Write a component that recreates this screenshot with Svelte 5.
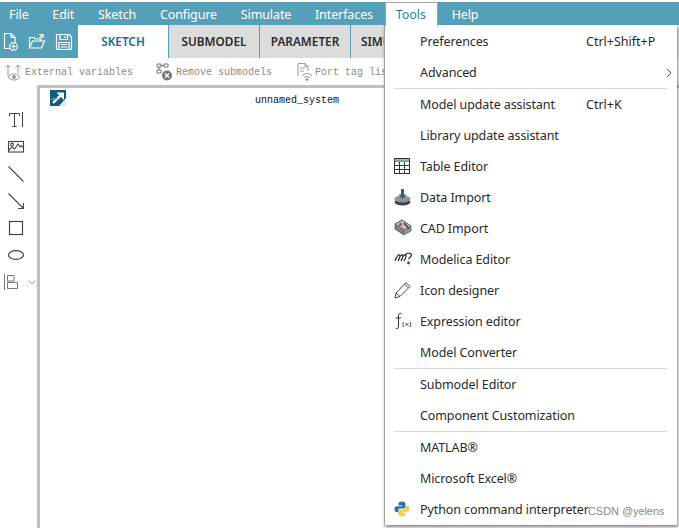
<script>
  const menus = [
    { label: 'File' }, { label: 'Edit' }, { label: 'Sketch' }, { label: 'Configure' },
    { label: 'Simulate' }, { label: 'Interfaces' }, { label: 'Tools', active: true }, { label: 'Help' }
  ];
  const groups = [
    [
      { label: 'Preferences', key: 'Ctrl+Shift+P' },
      { label: 'Advanced', arrow: true }
    ],
    [
      { label: 'Model update assistant', key: 'Ctrl+K' },
      { label: 'Library update assistant' },
      { label: 'Table Editor', icon: 'table' },
      { label: 'Data Import', icon: 'data' },
      { label: 'CAD Import', icon: 'cad' },
      { label: 'Modelica Editor', icon: 'modelica' },
      { label: 'Icon designer', icon: 'pencil' },
      { label: 'Expression editor', icon: 'fx' },
      { label: 'Model Converter' }
    ],
    [
      { label: 'Submodel Editor' },
      { label: 'Component Customization' }
    ],
    [
      { label: 'MATLAB®' },
      { label: 'Microsoft Excel®' },
      { label: 'Python command interpreter', icon: 'python' }
    ]
  ];
</script>

<div class="page">
  <nav class="menubar">
    {#each menus as m}
      <span class="menu-item" class:active={m.active}>{m.label}</span>
    {/each}
  </nav>

  <div class="tabrow">
    <div class="quick">
      <svg width="20" height="20" viewBox="0 0 20 20" fill="none" stroke="#fff" stroke-width="1.2">
        <path d="M10 16.5H4.5V1.5H11L15 5.5V10M11 1.5V5.5H15" />
        <circle cx="13.5" cy="14.5" r="3.8" />
        <path d="M13.5 12.3V16.7M11.3 14.5H15.7" />
      </svg>
      <svg class="q2" width="18" height="18" viewBox="0 0 18 18" fill="none" stroke="#fff" stroke-width="1.2">
        <path d="M1.5 15V4.5H6L7.5 6H13V8M1.5 15L4.5 8H16.5L13.5 15H1.5Z" />
        <path d="M11 1.5H15V5M15 1.5L11.5 5" />
      </svg>
      <svg class="q3" width="18" height="18" viewBox="0 0 18 18" fill="none" stroke="#fff" stroke-width="1.2">
        <path d="M1.5 1.5H14L16.5 4V16.5H1.5Z" />
        <path d="M5 1.5V6.5H12.5V1.5M10 3V5M4 16.5V9.5H14V16.5M6 11.5H12M6 14H12" />
      </svg>
    </div>
    <div class="tab current">SKETCH</div>
    <div class="tab">SUBMODEL</div>
    <div class="tab">PARAMETER</div>
    <div class="tab last">SIMULATION</div>
  </div>

  <div class="toolrow">
    <span class="tool first">
      <svg width="20" height="20" viewBox="0 0 20 20" fill="none" stroke="#9a9a9a" stroke-width="1">
        <path d="M4 14V3M1.5 5.5L4 3L6.5 5.5M14 11V3M11.5 5.5L14 3L16.5 5.5" />
        <ellipse cx="10" cy="15" rx="5.5" ry="3" />
        <circle cx="10" cy="15" r="1.5" fill="#9a9a9a" />
      </svg>
      External variables
    </span>
    <span class="tool second">
      <svg width="18" height="20" viewBox="0 0 18 20" fill="none" stroke="#777" stroke-width="1">
        <path d="M1 2H5V5H1ZM1 8H5V11H1ZM8 2H12V5H8ZM5 3.5H8M3 5V8" />
        <circle cx="11" cy="13.5" r="5" fill="#777" stroke="none" />
        <path d="M9 11.5L13 15.5M13 11.5L9 15.5" stroke="#fff" stroke-width="1.4" />
      </svg>
      Remove submodels
    </span>
    <span class="tool third">
      <svg width="18" height="20" viewBox="0 0 18 20" fill="none" stroke="#9a9a9a" stroke-width="1">
        <path d="M2 14V1.5H9L12 4.5V9M9 1.5V4.5H12M4 6H9M4 9H8" />
        <path d="M6 13.5Q11 9.5 16 13.5M8 15.5Q11 13.5 14 15.5" />
        <circle cx="11" cy="17.5" r="1" fill="#9a9a9a" />
      </svg>
      Port tag list
    </span>
  </div>

  <div class="workspace">
    <aside class="palette">
      <svg class="p-icon" width="18" height="18" viewBox="0 0 18 18" fill="none" stroke="#444" stroke-width="1">
        <path d="M2.5 5V2.5H12.5V5M7.5 2.5V15.5M5.5 15.5H9.5M15.5 1V16" />
      </svg>
      <svg class="p-icon" width="18" height="18" viewBox="0 0 18 18" fill="none" stroke="#444" stroke-width="1.1">
        <rect x="1.5" y="3.5" width="15" height="10.5" />
        <circle cx="5" cy="6.5" r="1.4" />
        <path d="M1.5 12.5L5 9L7.5 11L11 6L13 9L14.5 7.5L16.5 10" />
      </svg>
      <svg class="p-icon" width="18" height="18" viewBox="0 0 18 18" fill="none" stroke="#444" stroke-width="1.1">
        <path d="M1.5 1.5L16.5 16.5" />
      </svg>
      <svg class="p-icon" width="18" height="18" viewBox="0 0 18 18" fill="none" stroke="#444" stroke-width="1.1">
        <path d="M1.5 1.5L16.5 16.5M16.5 11V16.5H11" />
      </svg>
      <svg class="p-icon" width="18" height="18" viewBox="0 0 18 18" fill="none" stroke="#444" stroke-width="1.2">
        <rect x="2.5" y="2.5" width="13" height="13" />
      </svg>
      <svg class="p-icon" width="18" height="18" viewBox="0 0 18 18" fill="none" stroke="#444" stroke-width="1.2">
        <ellipse cx="9" cy="9" rx="7.5" ry="4.3" />
      </svg>
      <div class="align">
        <svg width="16" height="18" viewBox="0 0 16 18" fill="none" stroke="#777" stroke-width="1">
          <path d="M.5 1V17M3.5 2.5H10V8H3.5ZM3.5 9.5H13.5V15.5H3.5Z" />
        </svg>
        <svg width="8" height="5" viewBox="0 0 8 5" fill="none" stroke="#999" stroke-width="1">
          <path d="M.5 .5L4 4L7.5 .5" />
        </svg>
      </div>
    </aside>
    <main class="canvas">
      <svg class="logo" width="16" height="16" viewBox="0 0 16 16">
        <rect width="16" height="16" fill="#0e5a80" />
        <path d="M9 16L16 8V16Z" fill="#dfeaf0" />
        <path d="M3 13L12 4" fill="none" stroke="#fff" stroke-width="2.4" />
        <path d="M6.5 2.5H14V10Z" fill="#fff" />
        <path d="M1 9H10" stroke="#7fb0c6" stroke-width="1" />
      </svg>
      <span class="sysname">unnamed_system</span>
    </main>
  </div>

  <div class="dropdown">
    {#each groups as group, gi}
      {#if gi > 0}<div class="sep"></div>{/if}
      {#each group as item}
        <div class="row">
          <span class="ic">
            {#if item.icon === 'table'}
              <svg width="16" height="16" viewBox="0 0 16 16" fill="none" stroke="#333" stroke-width="1">
                <rect x=".5" y=".5" width="15" height="15" />
                <path d="M.5 2H15.5M.5 3.2H15.5" stroke="#45758a" />
                <path d="M.5 7.5H15.5M.5 11.5H15.5M5.5 4V15.5M10.5 4V15.5" />
              </svg>
            {:else if item.icon === 'data'}
              <svg width="17" height="18" viewBox="0 0 17 18">
                <ellipse cx="8.5" cy="14" rx="8" ry="3.5" fill="#444" />
                <ellipse cx="8.5" cy="11" rx="8" ry="3.4" fill="#939393" />
                <path d="M7 1H10V6.5H12.5L8.5 11L4.5 6.5H7Z" fill="#3e5f70" />
              </svg>
            {:else if item.icon === 'cad'}
              <svg width="18" height="17" viewBox="0 0 18 17">
                <path d="M1 5L8 1L17 7V12L10 16L1 10Z" fill="#8f969b" stroke="#555" stroke-width=".7" />
                <path d="M1 5L8 1L17 7L10 11Z" fill="#b9c0c4" stroke="#555" stroke-width=".7" />
                <path d="M10 11V16L1 10V5Z" fill="#666d72" />
                <path d="M2.5 7.5L8.5 11.5M2.5 9L8.5 13" stroke="#aab" stroke-width=".7" />
                <circle cx="6.5" cy="5.5" r="1.7" fill="#d9455f" />
                <path d="M10 4L15 9.5" stroke="#333" stroke-width="1.2" />
              </svg>
            {:else if item.icon === 'modelica'}
              <svg width="18" height="13" viewBox="0 0 18 13" fill="none" stroke="#222" stroke-width="1.2">
                <path d="M1 9Q4 1.5 5.5 3T4 9Q7 1.5 8.5 3T7 9Q10 1.5 11.5 3T10 9" />
                <path d="M11 3Q14 0 16.5 1.5T14.5 7" />
                <circle cx="14.5" cy="11" r="1.4" fill="#a5142a" stroke="none" />
              </svg>
            {:else if item.icon === 'pencil'}
              <svg width="17" height="18" viewBox="0 0 17 18" fill="none" stroke="#444" stroke-width="1">
                <path d="M1 17L2 12L12 1.5L16 5.5L6 15.5Z" />
                <path d="M2 12L6 15.5M10.5 3L14.5 7" />
              </svg>
            {:else if item.icon === 'fx'}
              <svg width="18" height="18" viewBox="0 0 18 18" fill="none" stroke="#333" stroke-width="1">
                <path d="M7.5 1.5Q4.5 0.5 4.5 4V14.5Q4.5 17 2 16.5M1.5 6H7" />
                <path d="M9.5 10Q8 12.5 9.5 15M16 10Q17.5 12.5 16 15" stroke="#555" />
                <path d="M11.5 11L14.5 14M14.5 11L11.5 14" stroke="#b33" />
              </svg>
            {:else if item.icon === 'python'}
              <svg width="16" height="16" viewBox="0 0 16 16">
                <path d="M8 .5C5 .5 4.5 1.6 4.5 3V4.5H8.2V5.2H3C1.4 5.2.5 6.2.5 8.2S1.5 11.2 3 11.2H4.4V9.5C4.4 8 5.5 7.5 6.5 7.5H9.7C11 7.5 11.5 6.8 11.5 5.7V3C11.5 1.4 10.4.5 8 .5Z" fill="#3572a5" />
                <path d="M8 15.5C11 15.5 11.5 14.4 11.5 13V11.5H7.8V10.8H13C14.6 10.8 15.5 9.8 15.5 7.8S14.5 4.8 13 4.8H11.6V6.5C11.6 8 10.5 8.5 9.5 8.5H6.3C5 8.5 4.5 9.2 4.5 10.3V13C4.5 14.6 5.6 15.5 8 15.5Z" fill="#f4cf45" />
              </svg>
            {/if}
          </span>
          <span class="label">{item.label}</span>
          {#if item.key}<span class="key">{item.key}</span>{/if}
          {#if item.arrow}
            <svg class="arrow" width="6" height="10" viewBox="0 0 6 10" fill="none" stroke="#555" stroke-width="1">
              <path d="M1 1L5 5L1 9" />
            </svg>
          {/if}
        </div>
      {/each}
    {/each}
    <span class="watermark">CSDN @yelens</span>
  </div>
</div>

<style>
  :global(body) {
    margin: 0;
    background: #fff;
  }
  .page {
    position: relative;
    width: 679px;
    height: 528px;
    overflow: hidden;
    background: #fff;
    font-family: "Noto Sans", "Liberation Sans", sans-serif;
    color: #222;
    padding-top: 2px;
    box-sizing: border-box;
  }
  .menubar {
    display: flex;
    height: 23px;
    background: #559fb9;
    color: #fff;
    font-size: 12.5px;
    letter-spacing: -0.1px;
    position: relative;
    z-index: 2;
  }
  .menu-item {
    padding: 1px 11.85px 0;
    line-height: 23px;
    white-space: nowrap;
    box-sizing: border-box;
  }
  .menu-item:first-child {
    padding-left: 9px;
  }
  .menu-item.active {
    color: #2a80a2;
    background: #fff;
    border: 1px solid #a0a0a0;
    border-bottom: none;
    padding: 0 11px 0 10px;
    margin-right: 2px;
    height: 24px;
  }
  .tabrow {
    display: flex;
    height: 33px;
    background: #eee;
  }
  .quick {
    width: 78px;
    flex: none;
    background: #559fb9;
    display: flex;
    align-items: center;
  }
  .q2 { margin-left: 8px; }
  .q3 { margin-left: 9px; }
  .tab {
    width: 90px;
    flex: none;
    background: #dcdcdc;
    border-right: 1px solid #559fb9;
    text-align: center;
    line-height: 33px;
    font-size: 11.8px;
    font-weight: 600;
    color: #2b2b2b;
    white-space: nowrap;
  }
  .tab.current {
    background: #fff;
    color: #156d92;
  }
  .tab.last {
    text-align: left;
    padding-left: 10px;
    box-sizing: border-box;
    overflow: hidden;
  }
  .toolrow {
    height: 27px;
    display: flex;
    align-items: center;
    background: #fff;
    font-family: "Liberation Mono", monospace;
    font-size: 10px;
    color: #8a8a8a;
    white-space: nowrap;
  }
  .tool {
    display: inline-flex;
    align-items: center;
    gap: 1px;
    padding-top: 1px;
  }
  .first { margin-left: 4px; }
  .second { margin-left: 23px; gap: 2px; }
  .third { margin-left: 24px; }
  .workspace {
    display: flex;
    height: 443px;
  }
  .palette {
    width: 37px;
    flex: none;
    display: flex;
    flex-direction: column;
    align-items: center;
    padding-top: 26px;
    box-sizing: border-box;
    gap: 9px;
  }
  .p-icon {
    display: block;
    margin-left: -5px;
  }
  .align {
    display: flex;
    align-items: center;
    gap: 8px;
    margin-left: 2px;
  }
  .canvas {
    flex: 1;
    border-left: 3px solid #c0c0c0;
    border-top: 3px solid #c0c0c0;
    background: #fff;
    display: flex;
    align-items: flex-start;
    padding: 2px 0 0 10px;
  }
  .logo {
    flex: none;
  }
  .sysname {
    margin-left: 189px;
    padding-top: 3px;
    font-family: "Liberation Mono", monospace;
    font-size: 10px;
    line-height: 16px;
    color: #111;
  }
  .dropdown {
    position: absolute;
    left: 384px;
    top: 25px;
    width: 293px;
    height: 500px;
    background: #fff;
    border-left: 1px solid #a0a0a0;
    box-shadow: 1px 2px 3px rgba(0, 0, 0, .5);
    box-sizing: border-box;
    padding-top: 1px;
    font-size: 12.5px;
    letter-spacing: -0.1px;
    color: #2a2a2a;
  }
  .row {
    display: flex;
    align-items: center;
    height: 31px;
    box-sizing: border-box;
    position: relative;
  }
  .ic {
    width: 35px;
    flex: none;
    display: flex;
    padding-left: 9px;
    margin-bottom: 2px;
    box-sizing: border-box;
    align-items: center;
  }
  .label {
    white-space: nowrap;
  }
  .key {
    position: absolute;
    left: 201px;
    white-space: nowrap;
    letter-spacing: 0;
  }
  .arrow {
    position: absolute;
    left: 281px;
  }
  .sep {
    height: 1px;
    background: #d8d8d8;
    margin-left: 9px;
    width: 273px;
  }
  .watermark {
    position: absolute;
    left: 203px;
    top: 480px;
    font-family: "Liberation Sans", sans-serif;
    font-size: 10.9px;
    letter-spacing: 0;
    color: #888;
    white-space: nowrap;
  }
</style>
